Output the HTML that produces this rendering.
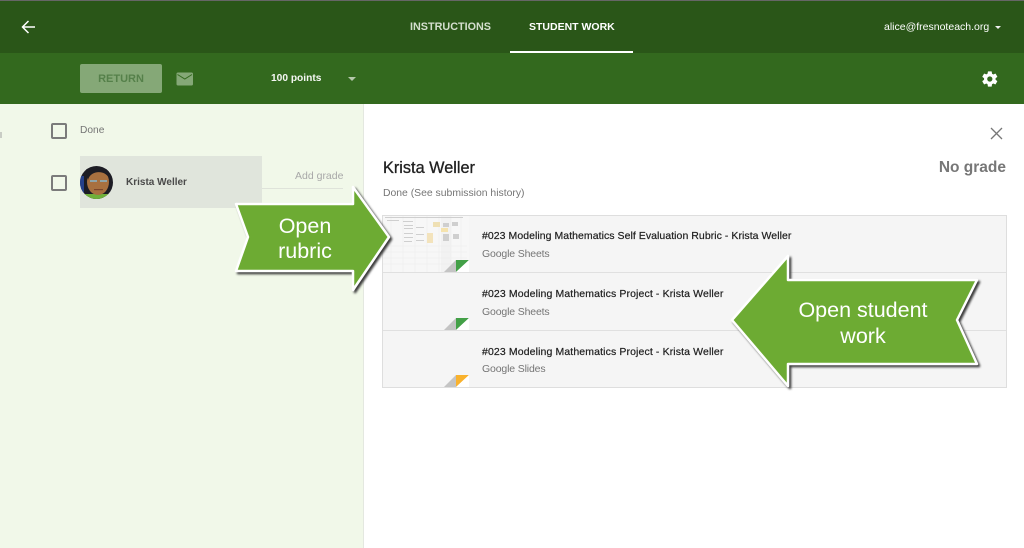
<!DOCTYPE html>
<html><head><meta charset="utf-8"><style>
html,body{margin:0;padding:0;width:1024px;height:548px;overflow:hidden;background:#fff;font-family:"Liberation Sans",sans-serif}
.a{position:absolute;white-space:nowrap}
#p{position:relative;width:1024px;height:548px;overflow:hidden;filter:blur(.35px)}
.cb{position:absolute;left:51px;width:12px;height:12px;border:2px solid #7b7b7b;border-radius:2px}
.t1{left:482px;font-size:10.5px;color:#212121;letter-spacing:.08px;-webkit-text-stroke:.2px #212121}
.t2{left:482px;font-size:10.5px;color:#757575;letter-spacing:-.15px}
</style></head><body><div id="p">
<div class="a" style="left:0;top:0;width:1024px;height:1px;background:#666"></div>
<div class="a" style="left:0;top:1px;width:1024px;height:52px;background:#2a5618"></div>
<div class="a" style="left:0;top:53px;width:1024px;height:51px;background:#33691e"></div>
<div class="a" style="left:0;top:104px;width:363px;height:444px;background:#f1f8e9"></div>
<div class="a" style="left:363px;top:104px;width:1px;height:444px;background:#e4e8e0"></div>
<div class="a" style="left:0;top:132px;width:2px;height:6px;background:#c9cdc5"></div>

<svg class="a" style="left:21px;top:20px" width="15" height="14" viewBox="0 0 15 14"><path d="M14 7H2M7.5 1L1.5 7L7.5 13" fill="none" stroke="#fff" stroke-width="1.5"/></svg>
<div class="a" style="left:410px;top:20px;font-size:10.8px;font-weight:bold;color:#d5dfcf;line-height:14px">INSTRUCTIONS</div>
<div class="a" style="left:529px;top:20px;font-size:10.5px;font-weight:bold;color:#fff;line-height:14px">STUDENT WORK</div>
<div class="a" style="left:510px;top:51px;width:123px;height:2px;background:#fff"></div>
<div class="a" style="left:884px;top:20px;font-size:10.5px;color:#fff;line-height:14px">alice@fresnoteach.org</div>
<div class="a" style="left:995px;top:26px;width:0;height:0;border-left:3.5px solid transparent;border-right:3.5px solid transparent;border-top:3.5px solid #f0f0f0"></div>

<div class="a" style="left:80px;top:64px;width:82px;height:29px;background:#85a877;border-radius:2px;color:#55804a;font-size:11px;font-weight:bold;line-height:30px;text-align:center">RETURN</div>
<svg class="a" style="left:176px;top:72px" width="18" height="14" viewBox="0 0 18 14"><rect x="0.5" y="0.5" width="16.5" height="13" rx="1.5" fill="#85a877"/><path d="M1.5 2.5L8.8 7L16 2.5" fill="none" stroke="#33691e" stroke-width="1"/></svg>
<div class="a" style="left:271px;top:72px;font-size:10.2px;font-weight:bold;color:#f5f7f3;line-height:14px">100 points</div>
<div class="a" style="left:348px;top:77px;width:0;height:0;border-left:4px solid transparent;border-right:4px solid transparent;border-top:4px solid #b5c8ab"></div>
<svg class="a" style="left:981px;top:70px" width="18" height="18" viewBox="0 0 24 24"><path fill="#fff" d="M19.4 13c.04-.32.06-.66.06-1s-.02-.68-.07-1l2.16-1.69a.5.5 0 0 0 .12-.65l-2.05-3.55a.5.5 0 0 0-.63-.22l-2.55 1.03a7.5 7.5 0 0 0-1.73-1L14.3 2.2a.5.5 0 0 0-.5-.42H9.7a.5.5 0 0 0-.5.42l-.39 2.71a7.9 7.9 0 0 0-1.73 1L4.53 4.88a.5.5 0 0 0-.62.22L1.86 8.65a.5.5 0 0 0 .12.65L4.14 11c-.05.32-.09.66-.09 1s.02.68.07 1l-2.16 1.69a.5.5 0 0 0-.12.65l2.05 3.55c.12.22.39.31.62.22l2.55-1.03c.53.4 1.1.74 1.73 1l.39 2.71c.04.24.25.42.5.42h4.1c.25 0 .46-.18.5-.42l.39-2.71a7.9 7.9 0 0 0 1.73-1l2.55 1.03c.23.09.5 0 .62-.22l2.05-3.55a.5.5 0 0 0-.12-.65L19.4 13zM11.75 15.5a3.5 3.5 0 1 1 0-7 3.5 3.5 0 0 1 0 7z"/></svg>

<div class="cb" style="top:123px"></div>
<div class="a" style="left:80px;top:124px;font-size:10.2px;color:#757575;line-height:14px">Done</div>
<div class="cb" style="top:175px"></div>
<div class="a" style="left:80px;top:156px;width:182px;height:52px;background:#e0e5dc"></div>
<svg class="a" style="left:80px;top:166px" width="33" height="33" viewBox="0 0 33 33"><defs><clipPath id="c"><circle cx="16.5" cy="16.5" r="16.5"/></clipPath></defs><g clip-path="url(#c)"><rect width="33" height="33" fill="#1c1c24"/><rect y="28" width="33" height="5" fill="#6fb03a"/><path d="M0 10h4v18H0z" fill="#26408a"/><ellipse cx="18" cy="16" rx="11" ry="13" fill="#a8703f"/><path d="M8 14C10 5 24 3 29 12V3H6z" fill="#1c1c24"/><rect x="10" y="14" width="7" height="2" fill="#8fa4a8"/><rect x="20" y="14" width="7" height="2" fill="#8fa4a8"/><rect x="14" y="23" width="9" height="1.2" fill="#7a452a"/></g></svg>
<div class="a" style="left:126px;top:176px;font-size:10px;font-weight:bold;color:#4a4a4a;line-height:14px">Krista Weller</div>
<div class="a" style="left:295px;top:169px;font-size:10.5px;color:#a8a8a8;line-height:14px">Add grade</div>
<div class="a" style="left:262px;top:188px;width:81px;height:1px;background:#dfe3da"></div>

<svg class="a" style="left:990px;top:127px" width="13" height="13" viewBox="0 0 13 13"><path d="M1 1L12 12M12 1L1 12" stroke="#777" stroke-width="1.3"/></svg>
<div class="a" style="left:383px;top:158px;font-size:16.3px;color:#212121;line-height:20px;-webkit-text-stroke:.3px #212121">Krista Weller</div>
<div class="a" style="right:18px;top:158px;font-size:15.5px;font-weight:bold;color:#777;line-height:20px">No grade</div>
<div class="a" style="left:383px;top:187px;font-size:10.4px;color:#757575;line-height:14px">Done (See submission history)</div>

<div class="a" style="left:382px;top:215px;width:623px;height:171px;border:1px solid #dedede;background:#f5f5f5"></div>
<div class="a" style="left:383px;top:272px;width:623px;height:1px;background:#e0e0e0"></div>
<div class="a" style="left:383px;top:330px;width:623px;height:1px;background:#e0e0e0"></div>

<svg class="a" style="left:383px;top:216px" width="86" height="172" viewBox="0 0 86 172">
<rect x="0" y="0" width="86" height="56" fill="#f7f7f7"/>
<g stroke="#ebebeb" stroke-width=".5"><path d="M0 30H84M0 36H84M0 42H84M0 48H84M8 0V56M20 0V56M32 0V56M44 0V56M56 0V56M68 0V56M78 0V56"/></g>
<rect x="58" y="0" width="10" height="56" fill="#eeeeee" opacity=".6"/>
<g fill="#cfcfcf"><rect x="2" y="1" width="78" height="1"/><rect x="4" y="4" width="12" height="1"/><rect x="20" y="5" width="10" height="1"/><rect x="21" y="9" width="9" height="1"/><rect x="21" y="12" width="9" height="1"/><rect x="21" y="17" width="9" height="1"/><rect x="21" y="21" width="9" height="1"/><rect x="21" y="25" width="8" height="1"/><rect x="33" y="11" width="8" height="1"/><rect x="33" y="18" width="8" height="1"/><rect x="33" y="24" width="8" height="1"/><rect x="60" y="7" width="6" height="4"/><rect x="69" y="6" width="6" height="4"/><rect x="60" y="18" width="6" height="7"/><rect x="70" y="18" width="6" height="5"/></g>
<rect x="50" y="6" width="7" height="5" fill="#efe0b4"/><rect x="58" y="12" width="7" height="4" fill="#f5e3ae"/><rect x="44" y="17" width="6" height="10" fill="#f3e3bc"/>
<path d="M61 56L73 44V56z" fill="#c4c4c4"/><path d="M73 44H86L73 56z" fill="#43a047"/><path d="M86 44V56H73z" fill="#fff"/>
<g transform="translate(0,58)"><path d="M61 56L73 44V56z" fill="#c4c4c4"/><path d="M73 44H86L73 56z" fill="#43a047"/><path d="M86 44V56H73z" fill="#fff"/></g>
<g transform="translate(0,115)"><path d="M61 56L73 44V56z" fill="#c4c4c4"/><path d="M73 44H86L73 56z" fill="#f9b22d"/><path d="M86 44V56H73z" fill="#fff"/></g>
</svg>

<div class="a t1" style="top:229px;line-height:14px;letter-spacing:.05px">#023 Modeling Mathematics Self Evaluation Rubric - Krista Weller</div>
<div class="a t2" style="top:247px;line-height:14px">Google Sheets</div>
<div class="a t1" style="top:287px;line-height:14px;letter-spacing:.12px">#023 Modeling Mathematics Project - Krista Weller</div>
<div class="a t2" style="top:305px;line-height:14px">Google Sheets</div>
<div class="a t1" style="top:345px;line-height:14px;letter-spacing:.12px">#023 Modeling Mathematics Project - Krista Weller</div>
<div class="a t2" style="top:362px;line-height:14px">Google Slides</div>

<svg class="a" style="left:0;top:0;overflow:visible" width="1024" height="548" viewBox="0 0 1024 548">
<path style="filter:drop-shadow(2px 2px 1px #3c3c3c)" d="M236 204H353V187L389 237L353 290V271H236L248 237z" fill="#6dab33" stroke="#fff" stroke-width="2.5" stroke-linejoin="round"/>
<path style="filter:drop-shadow(2px 2px 1px #3c3c3c)" d="M732 320L788 256V280H977L957 320L977 364H788V386z" fill="#6dab33" stroke="#fff" stroke-width="2.5" stroke-linejoin="round"/>
<text x="305" y="233" font-family="Liberation Sans" font-size="21.5" fill="#fff" text-anchor="middle">Open</text>
<text x="305" y="258" font-family="Liberation Sans" font-size="21.5" fill="#fff" text-anchor="middle">rubric</text>
<text x="863" y="317" font-family="Liberation Sans" font-size="21.5" fill="#fff" text-anchor="middle">Open student</text>
<text x="863" y="343" font-family="Liberation Sans" font-size="21.5" fill="#fff" text-anchor="middle">work</text>
</svg>
</div></body></html>
